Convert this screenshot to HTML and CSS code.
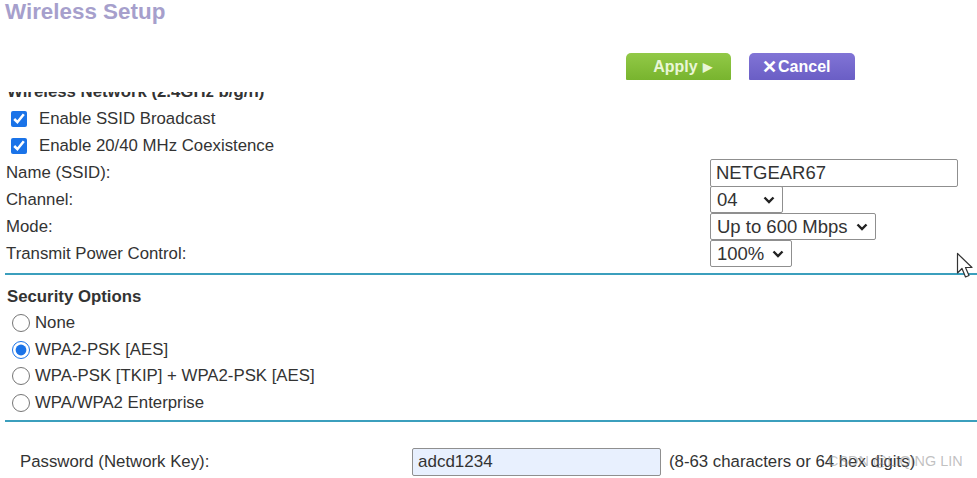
FILE: index.html
```html
<!DOCTYPE html>
<html>
<head>
<meta charset="utf-8">
<link rel="stylesheet" href="styles.css">
</head>
<body>
<div class="page">
  <h1 class="title">Wireless Setup</h1>
  <div class="actions">
    <button class="btn btn-apply">Apply <span class="tri">&#9654;</span></button>
    <button class="btn btn-cancel"><span class="x">&#10005;</span>Cancel</button>
  </div>
  <div class="scroller">
    <div class="content">
      <div class="row section-head">Wireless Network (2.4GHz b/g/n)</div>
      <label class="row check"><input type="checkbox" checked> Enable SSID Broadcast</label>
      <label class="row check"><input type="checkbox" checked> Enable 20/40 MHz Coexistence</label>
      <div class="row field">
        <span class="lbl">Name (SSID):</span>
        <input class="txt ssid" type="text" value="NETGEAR67">
      </div>
      <div class="row field">
        <span class="lbl">Channel:</span>
        <select class="sel sel-ch"><option>04</option></select>
      </div>
      <div class="row field">
        <span class="lbl">Mode:</span>
        <select class="sel sel-mode"><option>Up to 600 Mbps</option></select>
      </div>
      <div class="row field">
        <span class="lbl">Transmit Power Control:</span>
        <select class="sel sel-pow"><option>100%</option></select>
      </div>
      <hr class="divider">
      <div class="row sec-title">Security Options</div>
      <label class="row radio"><input type="radio" name="sec">None</label>
      <label class="row radio"><input type="radio" name="sec" checked>WPA2-PSK [AES]</label>
      <label class="row radio"><input type="radio" name="sec">WPA-PSK [TKIP] + WPA2-PSK [AES]</label>
      <label class="row radio"><input type="radio" name="sec">WPA/WPA2 Enterprise</label>
      <hr class="divider divider-2">
      <div class="pw-row">
        <span class="pw-lbl">Password (Network Key):</span>
        <input class="txt pw" type="text" value="adcd1234">
        <span class="hint">(8-63 characters or 64 hex digits)</span>
      </div>
    </div>
  </div>
  <div class="watermark">CSDN @LIQING LIN</div>
  <svg class="cursor" width="20" height="28" viewBox="0 0 20 28">
    <path d="M1.5 1.5 L1.5 21 L6 16.5 L9.5 25 L13 23.5 L9.5 15.5 L16 15.5 Z" fill="#fff" stroke="#333" stroke-width="1.2" stroke-linejoin="round"/>
  </svg>
</div>
</body>
</html>
```

FILE: styles.css
```css
html, body {
  margin: 0;
  padding: 0;
  background: #fff;
}
body {
  font-family: "Liberation Sans", Arial, sans-serif;
  color: #333;
  width: 977px;
  height: 478px;
  overflow: hidden;
}
.page {
  position: relative;
  width: 977px;
  height: 478px;
}
.title {
  margin: 0;
  padding: 0 0 0 5px;
  height: 24px;
  line-height: 24px;
  font-size: 22.4px;
  font-weight: bold;
  color: #a69fcc;
}
.actions {
  display: flex;
  gap: 18px;
  padding: 29px 0 0 626px;
  height: 27px;
}
.btn {
  border: 0;
  height: 27px;
  width: 106px;
  border-radius: 5px 5px 1px 1px;
  font-family: "Liberation Sans", Arial, sans-serif;
  font-weight: bold;
  font-size: 16px;
  padding: 0;
  display: flex;
  align-items: center;
  justify-content: center;
}
.btn-apply {
  width: 105px;
  background: linear-gradient(#92c947, #78b42e);
  color: #e9f6d6;
  gap: 5px;
  padding-left: 8px;
}
.btn-apply .tri {
  font-size: 12px;
}
.btn-cancel {
  background: linear-gradient(#8174d6, #6a5ec5);
  color: #fff;
  justify-content: flex-start;
  padding-left: 13px;
}
.btn-cancel .x {
  font-size: 18px;
  font-weight: bold;
  margin-right: 1px;
}
.scroller {
  display: flow-root;
  margin-top: 12px;
  height: 386px;
  overflow: hidden;
}
.content {
  margin-top: -14px;
}
.row {
  height: 27px;
  display: flex;
  align-items: center;
  font-size: 16.8px;
}
.section-head {
  font-weight: bold;
  padding-left: 7px;
}
.check {
  padding-left: 11px;
  gap: 12px;
}
.check input {
  width: 16px;
  height: 16px;
  margin: 0;
  accent-color: #1a73e8;
}
.field {
  padding-left: 6px;
}
.field .lbl {
  width: 704px;
}
.txt {
  box-sizing: border-box;
  height: 28px;
  border: 1px solid #8f8f8f;
  border-radius: 2px;
  font-family: "Liberation Sans", Arial, sans-serif;
  font-size: 18.5px;
  color: #333;
  padding: 0 5px;
  margin: 0;
}
.ssid {
  width: 248px;
}
.sel {
  -webkit-appearance: none;
  appearance: none;
  box-sizing: border-box;
  height: 27px;
  border: 1px solid #8f8f8f;
  border-radius: 2px;
  font-family: "Liberation Sans", Arial, sans-serif;
  font-size: 18.5px;
  color: #333;
  background-color: #fff;
  background-image: url("data:image/svg+xml,%3Csvg xmlns='http://www.w3.org/2000/svg' width='12' height='8' viewBox='0 0 12 8'%3E%3Cpath d='M1.5 1.5 L6 6 L10.5 1.5' fill='none' stroke='%23222' stroke-width='2.4'/%3E%3C/svg%3E");
  background-repeat: no-repeat;
  background-position: right 7px center;
  background-size: 12px 8px;
  margin: 0;
  padding: 0 0 0 6px;
}
.sel-ch { width: 73px; }
.sel-mode { width: 166px; }
.sel-pow { width: 82px; }
.divider {
  border: 0;
  height: 2px;
  background: #3b9fbd;
  margin: 6px 0 8px 5px;
}
.divider-2 {
  margin-top: 4px;
}
.sec-title {
  font-weight: bold;
  padding-left: 7px;
}
.radio {
  padding-left: 12px;
  height: 26.5px;
  gap: 5px;
}
.radio input {
  width: 18px;
  height: 18px;
  margin: 0;
  accent-color: #1a73e8;
}
.pw-row {
  display: flex;
  align-items: center;
  margin-top: 26px;
  height: 28px;
  font-size: 16.8px;
}
.pw-lbl {
  padding-left: 20px;
  width: 392px;
}
.pw {
  width: 249px;
  font-size: 17px;
  background: #e8f0fe;
}
.hint {
  margin-left: 8px;
  white-space: nowrap;
}
.watermark {
  position: absolute;
  left: 828px;
  top: 453px;
  font-size: 14.4px;
  color: rgba(140, 140, 140, 0.55);
  white-space: nowrap;
}
.cursor {
  position: absolute;
  left: 956px;
  top: 252px;
}
```
